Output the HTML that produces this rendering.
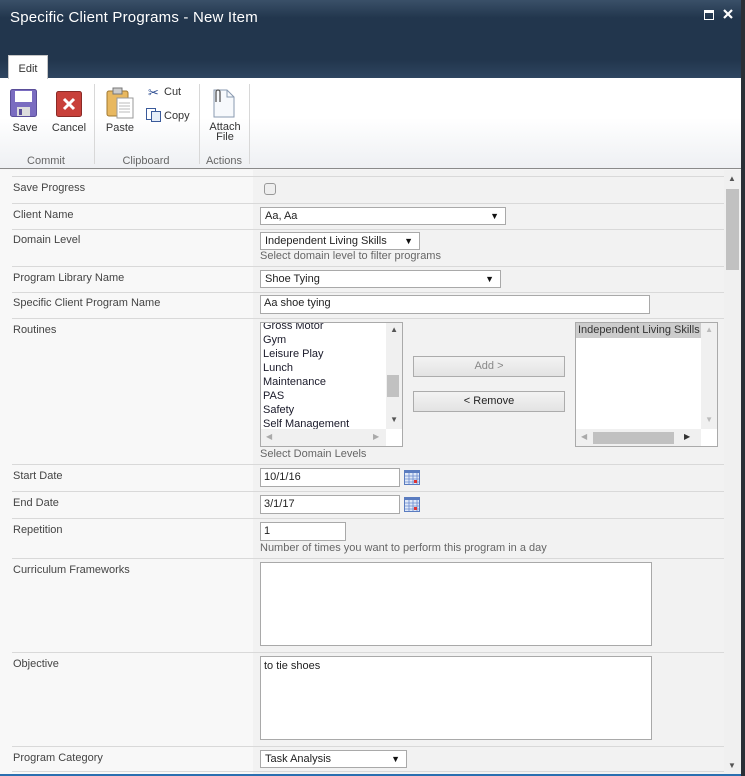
<!DOCTYPE html>
<html><head><meta charset="utf-8"><style>
*{box-sizing:border-box;margin:0;padding:0}
body{width:745px;height:776px;overflow:hidden;background:#2a2f36;font-family:"Liberation Sans",sans-serif;font-size:11px;color:#444;position:relative}
.a{position:absolute}
#win{left:0;top:0;width:741px;height:776px;background:#f5f5f5;border-bottom:2px solid #2a6fb0}
#hdr{left:0;top:0;width:741px;height:78px;background:linear-gradient(#3a5068 0,#22364d 18px,#22364d 60px,#2e4560 78px)}
#title{left:10px;top:9px;color:#fff;font-size:15px;letter-spacing:0.2px}
#tab{left:8px;top:55px;width:40px;height:24px;background:#fff;border:1px solid #c6c6c6;border-bottom:none;color:#333;font-size:11px;text-align:center;line-height:26px}
#rib{left:0;top:78px;width:741px;height:91px;background:linear-gradient(#fff 40px,#eef0f3);border-bottom:1px solid #8a8a8a}
.lbl{font-size:11px;color:#333;text-align:center}
.grp{color:#666;font-size:11px;text-align:center}
.vs{width:1px;background:#d8d8d8;top:84px;height:80px}
.sep{left:12px;height:1px;background:#d9d9d9;width:712px}
.fl{left:13px;color:#444;margin-top:1px}
.inp{background:#fff;border:1px solid #a9a9a9;color:#222;padding-left:3px;line-height:15px;height:18px}
.sel{background:#fff;border:1px solid #a9a9a9;color:#222;padding-left:4px;line-height:16px;height:18px}
.sel:after{content:"▼";position:absolute;right:6px;top:0;font-size:9px;color:#111}
.hint{color:#666}
.btn{background:linear-gradient(#f3f3f3,#e3e3e3);border:1px solid #acacac;text-align:center;line-height:19px;height:21px}
</style></head><body>
<div id="win" class="a">
<div id="hdr" class="a"></div>
<div id="title" class="a">Specific Client Programs - New Item</div>
<div class="a" style="left:704px;top:10px;width:10px;height:10px;border:1px solid #fff;border-top-width:3px"></div>
<svg class="a" style="left:723px;top:9px" width="10" height="10"><path d="M1 1L9 9M9 1L1 9" stroke="#fff" stroke-width="2.2"/></svg>
<div id="rib" class="a"></div>
<div id="tab" class="a">Edit</div>

<svg class="a" style="left:10px;top:89px" width="27" height="28"><rect x="0.5" y="0.5" width="26" height="27" rx="2" fill="#7a6cc0" stroke="#5a4e98"/><rect x="5" y="2" width="17" height="11" fill="#fff"/><rect x="7" y="18" width="13" height="9" fill="#ddd"/><rect x="9" y="20" width="3" height="6" fill="#5a4e98"/></svg>
<div class="a lbl" style="left:6px;top:122px;width:38px">Save</div>
<svg class="a" style="left:56px;top:91px" width="26" height="26"><rect x="0.5" y="0.5" width="25" height="25" rx="2" fill="#c8403a" stroke="#8a2a26"/><path d="M8 8L18 18M18 8L8 18" stroke="#fff" stroke-width="3"/></svg>
<div class="a lbl" style="left:50px;top:122px;width:38px">Cancel</div>
<div class="a grp" style="left:8px;top:155px;width:76px">Commit</div>
<div class="a vs" style="left:94px"></div>
<svg class="a" style="left:106px;top:87px" width="28" height="32"><rect x="1" y="4" width="21" height="25" rx="2" fill="#e8b860" stroke="#a07830"/><rect x="7" y="1" width="9" height="6" fill="#ccc" stroke="#777"/><rect x="11" y="11" width="16" height="20" fill="#fff" stroke="#999"/><path d="M13 16h11M13 19h11M13 22h11M13 25h11" stroke="#bbb"/></svg>
<div class="a lbl" style="left:100px;top:122px;width:40px">Paste</div>
<div class="a" style="left:148px;top:85px;color:#2a4a90;font-size:13px">✂</div>
<div class="a lbl" style="left:164px;top:86px">Cut</div>
<svg class="a" style="left:146px;top:108px" width="16" height="14"><rect x="0.5" y="0.5" width="9" height="11" fill="#fff" stroke="#3a5a9a"/><rect x="5.5" y="3.5" width="9" height="10" fill="#e6eef8" stroke="#3a5a9a"/></svg>
<div class="a lbl" style="left:164px;top:110px">Copy</div>
<div class="a grp" style="left:100px;top:155px;width:92px">Clipboard</div>
<div class="a vs" style="left:199px"></div>
<svg class="a" style="left:210px;top:88px" width="26" height="30"><path d="M4 2h13l7 7v20H4z" fill="#f7f9fc" stroke="#8a9ab0"/><path d="M17 2v7h7" fill="none" stroke="#8a9ab0"/><path d="M6 14V4a2 2 0 014 0v10" fill="none" stroke="#555" stroke-width="1.3"/></svg>
<div class="a lbl" style="left:204px;top:122px;width:42px;line-height:10px">Attach<br>File</div>
<div class="a grp" style="left:202px;top:155px;width:44px">Actions</div>
<div class="a vs" style="left:249px"></div>

<div class="a" style="left:253px;top:170px;width:471px;height:604px;background:#f2f2f2"></div>
<div class="a" style="left:0;top:170px;width:253px;height:604px;background:#f8f8f8"></div>

<div class="a sep" style="top:176px"></div>
<div class="a sep" style="top:203px"></div>
<div class="a sep" style="top:229px"></div>
<div class="a sep" style="top:266px"></div>
<div class="a sep" style="top:292px"></div>
<div class="a sep" style="top:318px"></div>
<div class="a sep" style="top:464px"></div>
<div class="a sep" style="top:491px"></div>
<div class="a sep" style="top:518px"></div>
<div class="a sep" style="top:558px"></div>
<div class="a sep" style="top:652px"></div>
<div class="a sep" style="top:746px"></div>
<div class="a sep" style="top:771px"></div>

<div class="a fl" style="top:181px">Save Progress</div>
<div class="a" style="left:264px;top:183px;width:12px;height:12px;border:1px solid #999;border-radius:3px;background:#eee"></div>
<div class="a fl" style="top:208px">Client Name</div>
<div class="a sel" style="left:260px;top:207px;width:246px">Aa, Aa</div>
<div class="a fl" style="top:233px">Domain Level</div>
<div class="a sel" style="left:260px;top:232px;width:160px">Independent Living Skills</div>
<div class="a hint" style="left:260px;top:250px">Select domain level to filter programs</div>
<div class="a fl" style="top:271px">Program Library Name</div>
<div class="a sel" style="left:260px;top:270px;width:241px">Shoe Tying</div>
<div class="a fl" style="top:296px">Specific Client Program Name</div>
<div class="a inp" style="left:260px;top:295px;width:390px;height:19px">Aa shoe tying</div>

<div class="a fl" style="top:323px">Routines</div>
<div class="a" style="left:260px;top:322px;width:143px;height:125px;background:#fff;border:1px solid #aaa;overflow:hidden">
<div style="position:absolute;left:2px;top:-4px;color:#1a1a2a;line-height:14px">Gross Motor<br>Gym<br>Leisure Play<br>Lunch<br>Maintenance<br>PAS<br>Safety<br>Self Management</div>
<div style="position:absolute;right:0;top:0;width:16px;height:106px;background:#f0f0f0"></div>
<div style="position:absolute;right:3px;top:52px;width:12px;height:22px;background:#c1c1c1"></div>
<div style="position:absolute;right:4px;top:2px;font-size:8px;color:#555">▲</div>
<div style="position:absolute;right:4px;top:92px;font-size:8px;color:#555">▼</div>
<div style="position:absolute;left:0;top:106px;width:125px;height:18px;background:#f0f0f0"></div>
<div style="position:absolute;left:5px;top:109px;font-size:8px;color:#aaa">◀</div>
<div style="position:absolute;left:112px;top:109px;font-size:8px;color:#aaa">▶</div>
</div>
<div class="a hint" style="left:260px;top:448px">Select Domain Levels</div>
<div class="a btn" style="left:413px;top:356px;width:152px;color:#888">Add &gt;</div>
<div class="a btn" style="left:413px;top:391px;width:152px;color:#222">&lt; Remove</div>
<div class="a" style="left:575px;top:322px;width:143px;height:125px;background:#fff;border:1px solid #aaa;overflow:hidden">
<div style="position:absolute;left:0;top:0;width:125px;height:15px;background:#ccc;color:#333;padding-left:2px;line-height:15px;white-space:nowrap;overflow:hidden">Independent Living Skills</div>
<div style="position:absolute;right:0;top:0;width:16px;height:106px;background:#f0f0f0"></div>
<div style="position:absolute;right:4px;top:2px;font-size:8px;color:#bbb">▲</div>
<div style="position:absolute;right:4px;top:92px;font-size:8px;color:#bbb">▼</div>
<div style="position:absolute;left:0;top:106px;width:125px;height:18px;background:#f0f0f0"></div>
<div style="position:absolute;left:17px;top:109px;width:81px;height:12px;background:#c1c1c1"></div>
<div style="position:absolute;left:5px;top:109px;font-size:8px;color:#aaa">◀</div>
<div style="position:absolute;left:108px;top:109px;font-size:8px;color:#333">▶</div>
</div>

<div class="a fl" style="top:469px">Start Date</div>
<div class="a inp" style="left:260px;top:468px;width:140px;height:19px;line-height:17px">10/1/16</div>
<svg class="a" style="left:404px;top:470px" width="16" height="15"><rect x="0" y="0" width="16" height="15" fill="#5a7cc0"/><rect x="1" y="3" width="14" height="11" fill="#dfe8f7"/><path d="M1 6h14M1 9h14M1 12h14M5 3v11M9 3v11M13 3v11" stroke="#6a8ad0" stroke-width="0.8"/><rect x="10" y="10" width="3" height="3" fill="#d33"/></svg>
<div class="a fl" style="top:496px">End Date</div>
<div class="a inp" style="left:260px;top:495px;width:140px;height:19px;line-height:17px">3/1/17</div>
<svg class="a" style="left:404px;top:497px" width="16" height="15"><rect x="0" y="0" width="16" height="15" fill="#5a7cc0"/><rect x="1" y="3" width="14" height="11" fill="#dfe8f7"/><path d="M1 6h14M1 9h14M1 12h14M5 3v11M9 3v11M13 3v11" stroke="#6a8ad0" stroke-width="0.8"/><rect x="10" y="10" width="3" height="3" fill="#d33"/></svg>
<div class="a fl" style="top:523px">Repetition</div>
<div class="a inp" style="left:260px;top:522px;width:86px;height:19px;line-height:17px">1</div>
<div class="a hint" style="left:260px;top:542px">Number of times you want to perform this program in a day</div>
<div class="a fl" style="top:563px">Curriculum Frameworks</div>
<div class="a inp" style="left:260px;top:562px;width:392px;height:84px"></div>
<div class="a fl" style="top:657px">Objective</div>
<div class="a inp" style="left:260px;top:656px;width:392px;height:84px;line-height:18px">to tie shoes</div>
<div class="a fl" style="top:751px">Program Category</div>
<div class="a sel" style="left:260px;top:750px;width:147px">Task Analysis</div>

<div class="a" style="left:724px;top:170px;width:17px;height:604px;background:#f0f0f0"></div>
<div class="a" style="left:726px;top:189px;width:13px;height:81px;background:#c1c1c1"></div>
<div class="a" style="left:728px;top:174px;font-size:8px;color:#555">▲</div>
<div class="a" style="left:728px;top:761px;font-size:8px;color:#555">▼</div>
</div>
</body></html>
